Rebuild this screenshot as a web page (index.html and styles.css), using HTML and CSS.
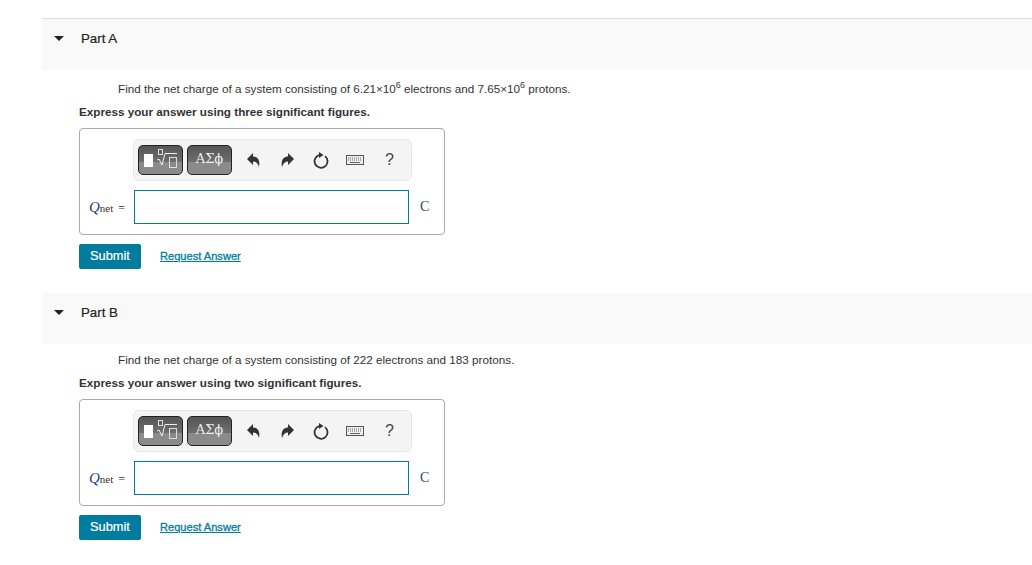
FILE: index.html
```html
<!DOCTYPE html>
<html lang="en">
<head>
  <meta charset="UTF-8">
  <title>Net charge</title>
  <link rel="stylesheet" href="styles.css">
</head>
<body>
  <div class="parts">
    <section class="part part-first">
      <header class="part-head">
        <span class="caret"></span>
        <h2>Part A</h2>
      </header>
      <div class="part-body">
        <p class="question">Find the net charge of a system consisting of 6.21×10<sup>6</sup> electrons and 7.65×10<sup>6</sup> protons.</p>
        <p class="hint">Express your answer using three significant figures.</p>
        <div class="answer-box">
          <div class="toolbar">
            <button class="tool-btn">
              <svg width="43" height="28" viewBox="0 0 43 28"><rect x="5" y="8" width="9" height="13" fill="#fff"/><rect x="19.500" y="3.500" width="4" height="5" fill="none" stroke="#ddd"/><path d="M18 14l2-1 3 6 3-11.500h12" fill="none" stroke="#eee"/><rect x="30.500" y="11.500" width="7" height="10" fill="none" stroke="#ddd"/></svg>
            </button>
            <button class="tool-btn tool-greek">ΑΣϕ</button>
            <span class="tool-icon icon-first"><svg width="13" height="14" viewBox="0 0 13 14"><path d="M0 6L6 0v3.500c4 0 7.500 3 6 10.500-1-3.500-3-5.500-6-5.500V12z" fill="#333"/></svg></span>
            <span class="tool-icon"><svg width="13" height="14" viewBox="0 0 13 14"><path d="M13 6L7 0v3.500C3 3.500-.5 6.500 1 14c1-3.500 3-5.500 6-5.500V12z" fill="#333"/></svg></span>
            <span class="tool-icon"><svg width="16" height="17" viewBox="0 0 16 17"><path d="M6 3.100a6.500 6.500 0 1 0 6 1" fill="none" stroke="#333" stroke-width="1.800"/><path d="M6 0l4.500 3L6 6z" fill="#333"/></svg></span>
            <span class="tool-icon"><svg width="18" height="10" viewBox="0 0 18 10"><rect x="0.500" y="0.500" width="17" height="9" fill="#eee" stroke="#555"/><path d="M2 3h14M2 5h14" stroke="#666" stroke-dasharray="1 1"/><path d="M4 7.500h10" stroke="#666"/></svg></span>
            <span class="tool-icon tool-help">?</span>
          </div>
          <div class="input-row">
            <span class="var-label"><i>Q</i><span class="sub">net</span><span class="eq">=</span></span>
            <input class="answer-input" type="text">
            <span class="unit">C</span>
          </div>
        </div>
        <div class="actions">
          <button class="btn-submit">Submit</button>
          <a class="request-link" href="#">Request Answer</a>
        </div>
      </div>
    </section>

    <section class="part">
      <header class="part-head">
        <span class="caret"></span>
        <h2>Part B</h2>
      </header>
      <div class="part-body">
        <p class="question">Find the net charge of a system consisting of 222 electrons and 183 protons.</p>
        <p class="hint">Express your answer using two significant figures.</p>
        <div class="answer-box">
          <div class="toolbar">
            <button class="tool-btn">
              <svg width="43" height="28" viewBox="0 0 43 28"><rect x="5" y="8" width="9" height="13" fill="#fff"/><rect x="19.500" y="3.500" width="4" height="5" fill="none" stroke="#ddd"/><path d="M18 14l2-1 3 6 3-11.500h12" fill="none" stroke="#eee"/><rect x="30.500" y="11.500" width="7" height="10" fill="none" stroke="#ddd"/></svg>
            </button>
            <button class="tool-btn tool-greek">ΑΣϕ</button>
            <span class="tool-icon icon-first"><svg width="13" height="14" viewBox="0 0 13 14"><path d="M0 6L6 0v3.500c4 0 7.500 3 6 10.500-1-3.500-3-5.500-6-5.500V12z" fill="#333"/></svg></span>
            <span class="tool-icon"><svg width="13" height="14" viewBox="0 0 13 14"><path d="M13 6L7 0v3.500C3 3.500-.5 6.500 1 14c1-3.500 3-5.500 6-5.500V12z" fill="#333"/></svg></span>
            <span class="tool-icon"><svg width="16" height="17" viewBox="0 0 16 17"><path d="M6 3.100a6.500 6.500 0 1 0 6 1" fill="none" stroke="#333" stroke-width="1.800"/><path d="M6 0l4.500 3L6 6z" fill="#333"/></svg></span>
            <span class="tool-icon"><svg width="18" height="10" viewBox="0 0 18 10"><rect x="0.500" y="0.500" width="17" height="9" fill="#eee" stroke="#555"/><path d="M2 3h14M2 5h14" stroke="#666" stroke-dasharray="1 1"/><path d="M4 7.500h10" stroke="#666"/></svg></span>
            <span class="tool-icon tool-help">?</span>
          </div>
          <div class="input-row">
            <span class="var-label"><i>Q</i><span class="sub">net</span><span class="eq">=</span></span>
            <input class="answer-input" type="text">
            <span class="unit">C</span>
          </div>
        </div>
        <div class="actions">
          <button class="btn-submit">Submit</button>
          <a class="request-link" href="#">Request Answer</a>
        </div>
      </div>
    </section>
  </div>
</body>
</html>
```

FILE: styles.css
```css
:root {
  --teal: #007c9e;
  --text-color: #333333;
  --head-bg: #f9f9f9;
}

html, body {
  margin: 0;
  padding: 0;
  background: #ffffff;
  color: var(--text-color);
  font-family: "Liberation Sans", Arial, sans-serif;
  font-size: 11.7px;
}

.parts {
  padding: 18px 0 0 42px;
}

.part {
  height: 274px;
}

.part-first {
  border-top: 1px solid #e0e0e0;
}

.part-head {
  height: 51px;
  background: var(--head-bg);
  display: flex;
  align-items: flex-start;
  padding-left: 12px;
  box-sizing: border-box;
}

.caret {
  width: 0;
  height: 0;
  margin-top: 17px;
  border-left: 5.500px solid transparent;
  border-right: 5.500px solid transparent;
  border-top: 5px solid #222222;
}

.part-head h2 {
  margin: 12px 0 0 16px;
  padding-left: 1px;
  font-size: 13.300px;
  line-height: 16px;
  font-weight: 400;
  color: #222222;
  -webkit-text-stroke: 0.2px #222222;
}

.part-body {
  padding-left: 37px;
}

.question {
  margin: 0;
  padding: 9px 0 0 39px;
  line-height: 13px;
  height: 15px;
}

.part-first .question {
  padding-top: 12px;
}

.question sup {
  font-size: 9px;
  line-height: 0;
}

.hint {
  margin: 8px 0 0;
  line-height: 13px;
  height: 14px;
  font-weight: 700;
}

.answer-box {
  width: 366px;
  height: 107px;
  box-sizing: border-box;
  margin-top: 9px;
  border: 1px solid #aaaaaa;
  border-radius: 4px;
  padding: 10px 32px 0 53px;
}

.toolbar {
  height: 42px;
  box-sizing: border-box;
  display: flex;
  align-items: center;
  gap: 4px;
  padding-left: 4px;
  background: #f4f4f4;
  border: 1px solid #e6e6e6;
  border-radius: 6px;
}

.tool-btn {
  width: 45px;
  height: 30px;
  flex-shrink: 0;
  padding: 0;
  display: flex;
  align-items: center;
  justify-content: center;
  color: #eeeeee;
  background: linear-gradient(#555555 0, #6e6e6e 56%, #8b8b8b 57%, #8a8a8a 100%);
  border: 1px solid #222222;
  border-radius: 5px;
}

.tool-greek {
  font-family: "DejaVu Serif", "Liberation Serif", serif;
  font-size: 13px;
  padding-bottom: 3px;
}

.tool-icon {
  width: 30px;
  flex-shrink: 0;
  display: flex;
  align-items: center;
  justify-content: center;
}

.icon-first {
  margin-left: 2px;
}

.tool-help {
  padding-left: 1px;
  box-sizing: border-box;
  font-size: 16px;
  color: #444444;
}

.input-row {
  display: flex;
  align-items: center;
  margin: 9px 0 0 -44px;
  width: 356px;
}

.var-label {
  width: 45px;
  flex-shrink: 0;
  font-family: "Liberation Serif", serif;
  font-size: 14px;
  white-space: nowrap;
}

.var-label i {
  color: #1c3f78;
  font-size: 15px;
}

.sub {
  font-size: 11px;
  color: #333333;
}

.eq {
  margin-left: 5px;
  font-size: 12px;
}

.answer-input {
  width: 275px;
  height: 34px;
  flex-shrink: 0;
  box-sizing: border-box;
  border: 1px solid var(--teal);
  outline: none;
  padding: 0;
  background: #ffffff;
}

.unit {
  margin-left: 11px;
  font-family: "Liberation Serif", serif;
  font-size: 14px;
  color: #2a4a6a;
}

.actions {
  display: flex;
  align-items: center;
  margin-top: 9px;
}

.btn-submit {
  width: 62px;
  height: 25px;
  padding: 0 0 2px;
  border: none;
  border-radius: 2px;
  background: var(--teal);
  color: #ffffff;
  font-family: inherit;
  font-size: 12.800px;
  -webkit-text-stroke: 0.2px #ffffff;
}

.request-link {
  margin-left: 19px;
  padding-bottom: 2px;
  color: var(--teal);
  font-size: 11.100px;
  -webkit-text-stroke: 0.3px var(--teal);
}
```
